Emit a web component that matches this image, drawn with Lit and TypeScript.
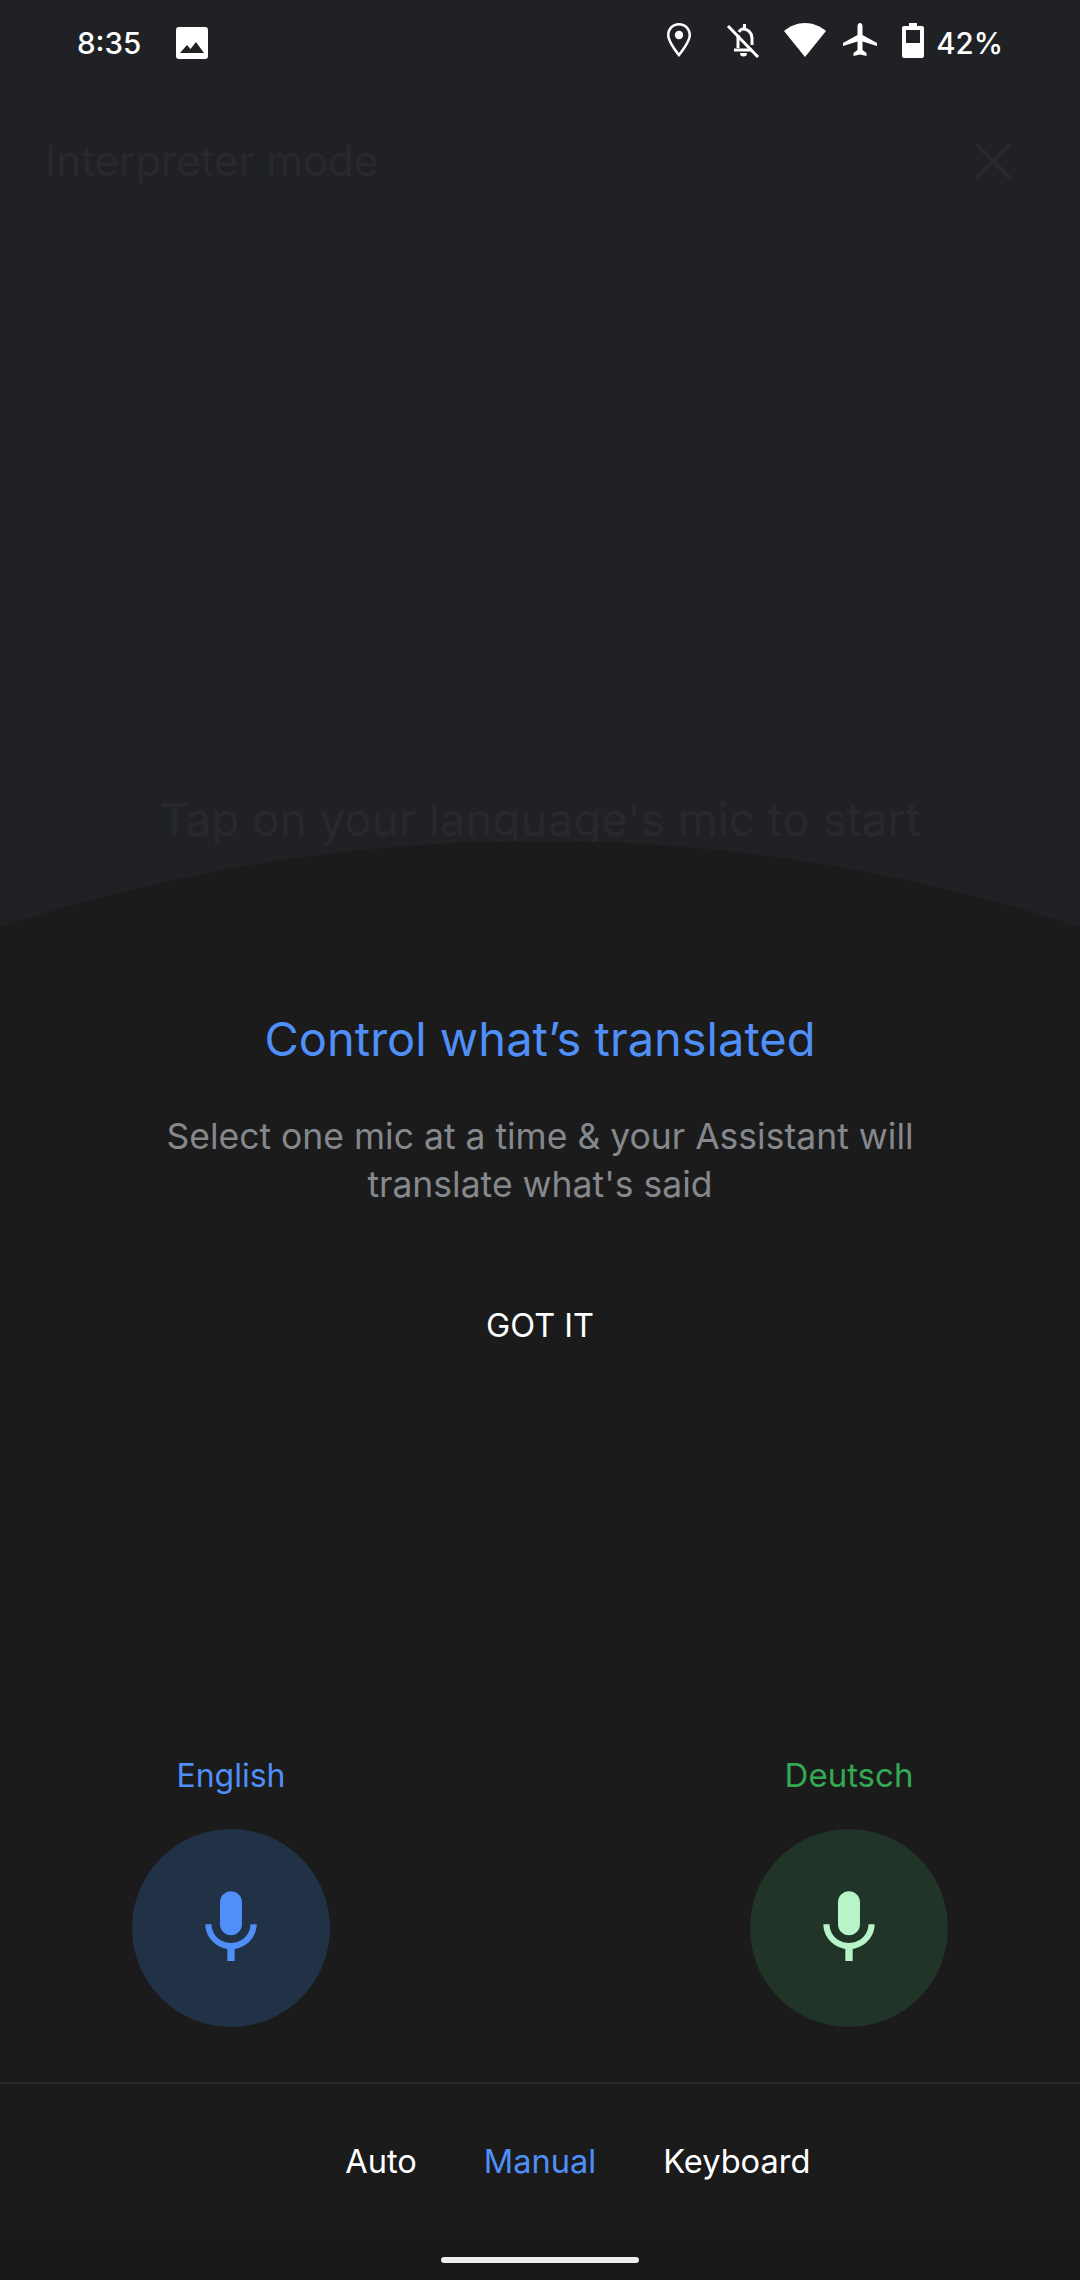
import { LitElement, html, css } from "lit";
import { customElement } from "lit/decorators.js";

const MIC = "M12 14c1.66 0 2.99-1.34 2.99-3L15 5c0-1.66-1.34-3-3-3S9 3.34 9 5v6c0 1.66 1.34 3 3 3zm5.3-3c0 3-2.54 5.1-5.3 5.1S6.7 14 6.7 11H5c0 3.41 2.72 6.23 6 6.72V21h2v-3.28c3.28-.48 6-3.3 6-6.72h-1.7z";

@customElement("app-root")
export class AppRoot extends LitElement {
  static styles = css`
    :host { display: block; width: 1080px; height: 2280px; background: #202124; overflow: hidden; font-family: "Inter", "Roboto", sans-serif; }
    .page { display: flex; flex-direction: column; height: 2280px; }
    .top { height: 841px; flex: none; display: flex; flex-direction: column; }
    .status { height: 86px; padding: 0 77px 0 77px; display: flex; align-items: center; color: #fff; font-size: 29.5px; font-weight: 500; box-sizing: border-box; flex: none; }
    .time { width: 65px; line-height: 30px; white-space: nowrap; }
    .status svg { display: block; fill: #fff; flex: none; }
    .img { margin-left: 34px; }
    .right { margin-left: auto; display: flex; align-items: center; }
    .pct { margin-left: 12px; line-height: 30px; white-space: nowrap; }
    .bar { display: flex; justify-content: space-between; align-items: center; padding: 49px 68px 0 45px; color: #28292c; font-size: 42px; }
    .bar svg { display: block; }
    .prompt { margin-top: 610px; text-align: center; color: #28292c; font-size: 45.7px; line-height: 48px; white-space: nowrap; }
    .sheet { flex: 1; display: flex; flex-direction: column; background: #1b1b1b; clip-path: circle(1738px at 540px 1738px); color: #fff; }
    .intro { display: flex; flex-direction: column; align-items: center; text-align: center; padding-top: 171px; height: 915px; box-sizing: border-box; flex: none; }
    h1 { margin: 0; font-size: 47px; font-weight: 400; line-height: 54px; color: #4f8ff7; white-space: nowrap; }
    p { margin: 47px 0 0; font-size: 35.5px; line-height: 48px; color: #85888c; white-space: nowrap; }
    .ok { margin-top: 97px; font-size: 32.5px; line-height: 40px; color: #fff; }
    .mics { display: flex; justify-content: space-between; padding: 0 132px; height: 326px; box-sizing: border-box; flex: none; }
    .mic { width: 198px; display: flex; flex-direction: column; align-items: center; }
    .lang { font-size: 32px; line-height: 40px; height: 73px; white-space: nowrap; }
    .circle { width: 198px; height: 198px; border-radius: 50%; display: flex; align-items: center; justify-content: center; }
    .en .lang { color: #4f8ff7; } .en .circle { background: #213247; } .en svg { fill: #4f8ff7; }
    .de .lang { color: #34a853; font-size: 33px; line-height: 38px; } .de .circle { background: #203527; } .de svg { fill: #b7f5c9; }
    .tabs { flex: 1; border-top: 2px solid #2a2b2f; display: grid; grid-template-columns: 1fr auto 1fr; align-items: center; column-gap: 67px; font-size: 32.6px; font-weight: 400; padding-bottom: 2px; }
    .tabs .l { justify-self: end; }
    .tabs .on { color: #4f8ff7; }
    .nav { height: 41px; flex: none; background: #171717; display: flex; justify-content: center; padding-top: 18px; box-sizing: border-box; }
    .pill { width: 198px; height: 6px; border-radius: 3px; background: #eee; }
  `;

  private micIcon() {
    return html`<svg width="88" height="88" viewBox="0 0 24 24"><path d=${MIC}></path></svg>`;
  }

  render() {
    return html`<div class="page">
      <div class="top">
        <div class="status">
          <span class="time">8:35</span>
          <svg class="img" width="32" height="32" viewBox="0 0 32 32"><path fill-rule="evenodd" d="M3 0h26a3 3 0 0 1 3 3v26a3 3 0 0 1-3 3H3a3 3 0 0 1-3-3V3a3 3 0 0 1 3-3zM4 26h24L20 15l-5.500 7-3.500-4z"></path></svg>
          <div class="right">
            <svg width="26" height="34" viewBox="0 0 26 34" style="margin-top:-6px"><path fill-rule="evenodd" d="M13 0C6 0 1 5.400 1 12c0 8 12 22 12 22s12-14 12-22C25 5.400 20 0 13 0zm0 2.500c5.300 0 9.500 4.200 9.500 9.500 0 5.300-6.500 14-9.500 18-3-4-9.500-12.700-9.500-18C3.500 6.700 7.700 2.500 13 2.500z"></path><circle cx="13" cy="12" r="4.200"></circle></svg>
            <svg width="34" height="34" viewBox="0 0 34 34" style="margin-left:34px;margin-top:-4px"><g fill="none" stroke="#fff" stroke-width="3"><path d="M2 2l30 31"></path><path d="M12 11v13M8 26h18"></path><path d="M13 8c1-2 2.500-3 4-3 5 0 9 4 9 9v7"></path></g><path d="M17 0h3v4h-3zM14 29h7a3.500 3.500 0 0 1-7 0z"></path></svg>
            <svg width="42" height="34" viewBox="0 0 42 34" style="margin-left:24px;margin-top:-6px"><path d="M21 0C13 0 6 3 0 8l21 26L42 8C36 3 29 0 21 0z"></path></svg>
            <svg width="34" height="35" viewBox="0 0 34 35" style="margin-left:17px;margin-top:-5px"><path d="M17 0c1.500 0 2.500 1.500 2.500 3.500V12L34 20v3l-14.500-4.500V27l4 3v3L17 31.500 10.500 33v-3l4-3v-8.500L0 23v-3l14.500-8V3.500C14.500 1.500 15.500 0 17 0z"></path></svg>
            <svg width="22" height="35" viewBox="0 0 22 35" style="margin-left:25px;margin-top:-6px"><path fill-rule="evenodd" d="M7 0h8v3h5a2 2 0 0 1 2 2v28a2 2 0 0 1-2 2H2a2 2 0 0 1-2-2V5a2 2 0 0 1 2-2h5zM4 7v13h14V7z"></path></svg>
            <span class="pct">42%</span>
          </div>
        </div>
        <div class="bar">
          <span>Interpreter mode</span>
          <svg width="38" height="38" viewBox="0 0 38 38"><path d="M2 2l34 34M36 2L2 36" stroke="#28292c" stroke-width="4" fill="none"></path></svg>
        </div>
        <div class="prompt">Tap on your language's mic to start</div>
      </div>
      <div class="sheet">
        <div class="intro">
          <h1>Control what’s translated</h1>
          <p>Select one mic at a time &amp; your Assistant will<br>translate what's said</p>
          <div class="ok">GOT IT</div>
        </div>
        <div class="mics">
          <div class="mic en"><div class="lang">English</div><div class="circle">${this.micIcon()}</div></div>
          <div class="mic de"><div class="lang">Deutsch</div><div class="circle">${this.micIcon()}</div></div>
        </div>
        <div class="tabs"><span class="l">Auto</span><span class="on">Manual</span><span>Keyboard</span></div>
        <div class="nav"><div class="pill"></div></div>
      </div>
    </div>`;
  }
}
